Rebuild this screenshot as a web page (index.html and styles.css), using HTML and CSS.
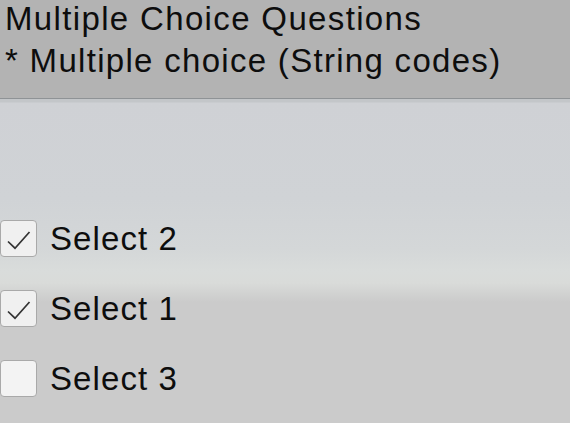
FILE: index.html
```html
<!DOCTYPE html>
<html>
<head>
<meta charset="utf-8">
<link rel="stylesheet" href="styles.css">
</head>
<body>
<div class="screen">
  <header class="header">
    <div class="title">Multiple Choice Questions</div>
    <div class="subtitle">* Multiple choice (String codes)</div>
  </header>
  <main class="stage">
    <div class="options">
      <label class="option">
        <span class="box checked"><svg viewBox="0 0 37 37" width="37" height="37"><path d="M8 21.5 L15 28.2 L29.5 12" fill="none" stroke="#333" stroke-width="1.7"/></svg></span>
        <span class="label">Select 2</span>
      </label>
      <label class="option">
        <span class="box checked"><svg viewBox="0 0 37 37" width="37" height="37"><path d="M8 21.5 L15 28.2 L29.5 12" fill="none" stroke="#333" stroke-width="1.7"/></svg></span>
        <span class="label">Select 1</span>
      </label>
      <label class="option">
        <span class="box"></span>
        <span class="label">Select 3</span>
      </label>
    </div>
  </main>
</div>
</body>
</html>
```
FILE: styles.css
```css
html, body {
  margin: 0;
  padding: 0;
}
body {
  width: 570px;
  height: 423px;
  overflow: hidden;
  font-family: "Liberation Sans", Arial, sans-serif;
  color: #0d0d0d;
}
.screen {
  display: flex;
  flex-direction: column;
  height: 423px;
}
.header {
  height: 99px;
  box-sizing: border-box;
  background: #b3b3b3;
  border-bottom: 1px solid #8f9396;
  padding: 0 0 0 5px;
  font-size: 33px;
  line-height: 42px;
}
.title {
  letter-spacing: 1.35px;
  margin-top: -2px;
}
.subtitle {
  letter-spacing: 1.3px;
}
.stage {
  flex: 1;
  background: linear-gradient(to bottom,
    #c3c6c9 0px, #c3c6c9 3px,
    #cfd1d5 4px,
    #d0d3d6 100px,
    #d4d7d8 150px,
    #d9dcdb 172px,
    #d9dbd9 184px,
    #cbcbcb 203px,
    #cbcbcb 100%);
}
.options {
  display: flex;
  flex-direction: column;
  gap: 33px;
  padding-top: 121px;
}
.option {
  display: flex;
  align-items: center;
  gap: 13px;
  height: 37px;
}
.box {
  width: 37px;
  height: 37px;
  box-sizing: border-box;
  border: 1px solid #a9a9a9;
  border-radius: 4px;
  background: #f3f3f3;
  position: relative;
  flex: none;
}
.box svg {
  position: absolute;
  left: -1px;
  top: -1px;
}
.box.checked {
  background: #f0f0f0;
}
.label {
  font-size: 33px;
  line-height: 37px;
  letter-spacing: 1.1px;
}
```
